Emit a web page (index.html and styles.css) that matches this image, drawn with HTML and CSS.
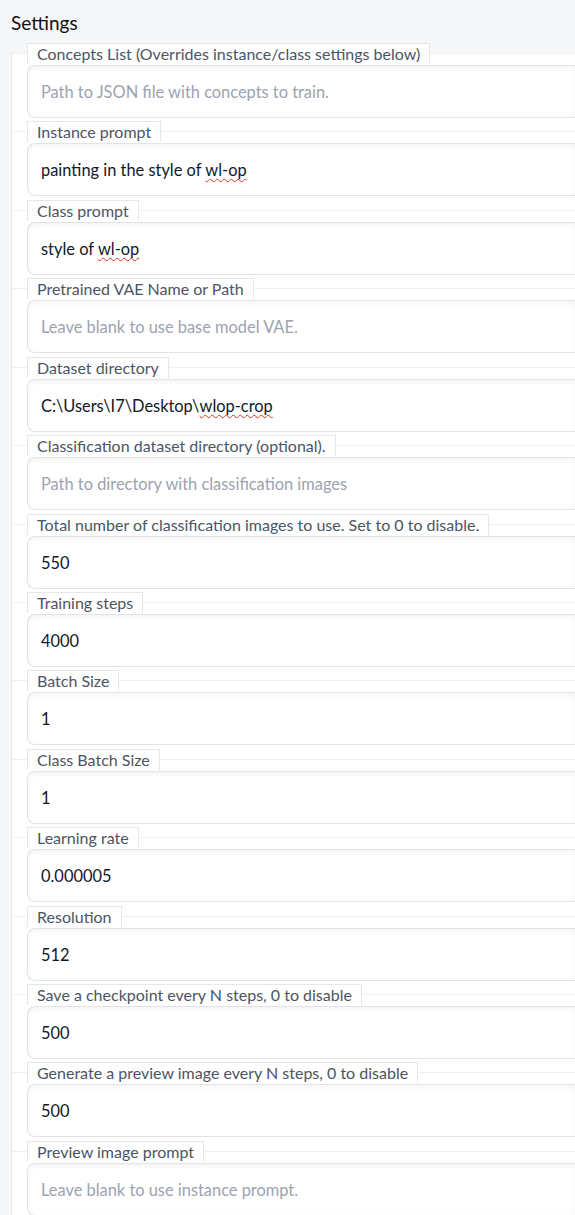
FILE: index.html
```html
<!DOCTYPE html>
<html lang="en">
<head>
<meta charset="utf-8">
<title>Settings</title>
<link rel="stylesheet" href="styles.css">
</head>
<body>
<div class="page">
  <h2 class="title">Settings</h2>
  <div class="panel">
    <div class="field">
      <span class="label">Concepts List (Overrides instance/class settings below)</span>
      <div class="box placeholder">Path to JSON file with concepts to train.</div>
    </div>
    <div class="field">
      <span class="label">Instance prompt</span>
      <div class="box">painting in the style of <span class="typo">wl-op</span></div>
    </div>
    <div class="field">
      <span class="label">Class prompt</span>
      <div class="box">style of <span class="typo">wl-op</span></div>
    </div>
    <div class="field">
      <span class="label">Pretrained VAE Name or Path</span>
      <div class="box placeholder">Leave blank to use base model VAE.</div>
    </div>
    <div class="field">
      <span class="label">Dataset directory</span>
      <div class="box">C:\Users\I7\Desktop\<span class="typo">wlop-crop</span></div>
    </div>
    <div class="field">
      <span class="label">Classification dataset directory (optional).</span>
      <div class="box placeholder">Path to directory with classification images</div>
    </div>
    <div class="field">
      <span class="label">Total number of classification images to use. Set to 0 to disable.</span>
      <div class="box">550</div>
    </div>
    <div class="field">
      <span class="label">Training steps</span>
      <div class="box">4000</div>
    </div>
    <div class="field">
      <span class="label">Batch Size</span>
      <div class="box">1</div>
    </div>
    <div class="field">
      <span class="label">Class Batch Size</span>
      <div class="box">1</div>
    </div>
    <div class="field">
      <span class="label">Learning rate</span>
      <div class="box">0.000005</div>
    </div>
    <div class="field">
      <span class="label">Resolution</span>
      <div class="box">512</div>
    </div>
    <div class="field">
      <span class="label">Save a checkpoint every N steps, 0 to disable</span>
      <div class="box">500</div>
    </div>
    <div class="field">
      <span class="label">Generate a preview image every N steps, 0 to disable</span>
      <div class="box">500</div>
    </div>
    <div class="field">
      <span class="label">Preview image prompt</span>
      <div class="box placeholder">Leave blank to use instance prompt.</div>
    </div>
  </div>
</div>
</body>
</html>
```

FILE: styles.css
```css
html, body {
  margin: 0;
  padding: 0;
  overflow: hidden;
  background: #f6f7f9;
}

body {
  font-family: Lato, "Noto Sans", "Liberation Sans", sans-serif;
  color: #1f2937;
}

.page {
  padding-top: 11px;
  height: 1204px;
  overflow: hidden;
}

.title {
  margin: 0 0 18px 11px;
  font-size: 19px;
  line-height: 24px;
  font-weight: 400;
  color: #111111;
}

.panel {
  margin-left: 11px;
  border-left: 1px solid #e7e8eb;
  background: #ffffff;
  display: flex;
  flex-direction: column;
}

.field {
  border-top: 1px solid #eff0f2;
  padding: 0 0 13.43px 15px;
  display: flex;
  flex-direction: column;
  align-items: flex-start;
}

.label {
  margin-top: -11px;
  background: #ffffff;
  border: 1px solid #e5e7eb;
  border-bottom: none;
  padding: 0 9px;
  font-size: 16px;
  line-height: 20px;
  color: #4b5563;
  white-space: nowrap;
}

.box {
  margin-top: 1px;
  align-self: stretch;
  box-sizing: border-box;
  height: 53px;
  border: 1px solid #e2e4e8;
  border-right: none;
  border-radius: 8px 0 0 8px;
  background: #ffffff;
  box-shadow: inset 0 2px 5px rgba(0, 0, 0, 0.05);
  padding-left: 13px;
  display: flex;
  align-items: center;
  font-size: 16.4px;
  color: #111827;
  white-space: pre;
}

.placeholder {
  color: #9ca3af;
}

.typo {
  text-decoration: underline wavy #e0301e;
  text-decoration-thickness: 1px;
  text-underline-offset: 2px;
  text-decoration-skip-ink: none;
}
```
